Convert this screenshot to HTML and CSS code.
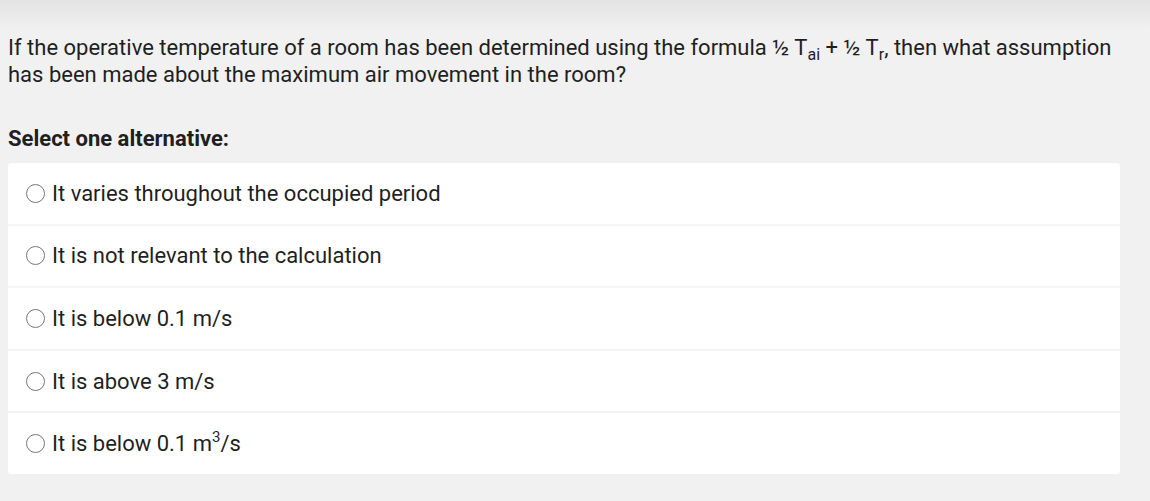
FILE: index.html
```html
<!DOCTYPE html>
<html>
<head>
<meta charset="utf-8">
<link rel="stylesheet" href="styles.css">
</head>
<body>
<div class="page">
  <p class="question">If the operative temperature of a room has been determined using the formula ½ T<sub>ai</sub> + ½ T<sub>r</sub>, then what assumption has been made about the maximum air movement in the room?</p>
  <p class="prompt">Select one alternative:</p>
  <div class="options">
    <label class="option"><span class="radio"></span><span class="label">It varies throughout the occupied period</span></label>
    <label class="option"><span class="radio"></span><span class="label">It is not relevant to the calculation</span></label>
    <label class="option"><span class="radio"></span><span class="label">It is below 0.1 m/s</span></label>
    <label class="option"><span class="radio"></span><span class="label">It is above 3 m/s</span></label>
    <label class="option"><span class="radio"></span><span class="label">It is below 0.1 m<sup>3</sup>/s</span></label>
  </div>
</div>
</body>
</html>
```
FILE: styles.css
```css
html, body {
  margin: 0;
  padding: 0;
}
body {
  background: linear-gradient(to bottom, #e3e3e3 0px, #f1f1f1 30px, #f1f1f1 100%);
  font-family: Roboto, "Liberation Sans", sans-serif;
  color: #1f1f1f;
  min-height: 501px;
}
.page {
  padding: 34px 30px 0 8px;
}
.question {
  margin: 0;
  font-size: 22px;
  line-height: 27px;
}
.question sub {
  font-size: 16px;
  line-height: 0;
  vertical-align: -5px;
}
.prompt {
  margin: 37px 0 0 0;
  font-size: 22px;
  line-height: 27px;
  font-weight: 700;
}
.options {
  margin-top: 11px;
  display: flex;
  flex-direction: column;
  gap: 2px;
  background: #f4f4f4;
  border-radius: 3px;
}
.option {
  display: flex;
  align-items: center;
  height: 60.6px;
  background: #fff;
  padding-left: 18px;
  font-size: 22px;
}
.option:first-child { border-radius: 3px 3px 0 0; }
.option:last-child { border-radius: 0 0 3px 3px; }
.radio {
  width: 17px;
  height: 17px;
  border: 1.5px solid #777;
  border-radius: 50%;
  margin-right: 7px;
  flex: none;
}
.label sup {
  font-size: 15px;
  line-height: 0;
  vertical-align: 9px;
}
```
